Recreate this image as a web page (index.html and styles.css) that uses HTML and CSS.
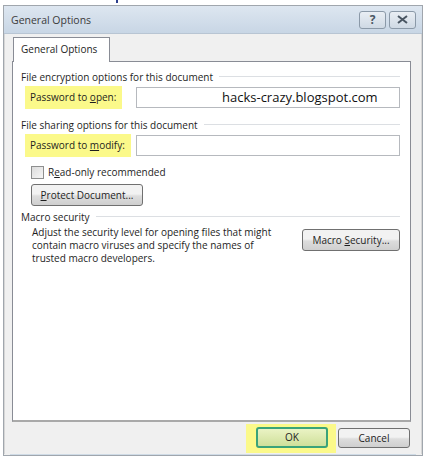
FILE: index.html
```html
<!DOCTYPE html>
<html lang="en">
<head>
  <meta charset="UTF-8">
  <meta name="viewport" content="width=device-width, initial-scale=1.0">
  <title>General Options</title>
  <link rel="stylesheet" href="styles.css">
</head>
<body>
  <div class="mark"></div>
  <div class="window">
    <div class="titlebar">
      <span class="title">General Options</span>
      <div class="caption-buttons">
        <span class="cap-btn">?</span>
        <span class="cap-btn">
          <svg width="11" height="9" viewBox="0 0 11 9"><path d="M1 1 L10 8 M10 1 L1 8" stroke="#4a5663" stroke-width="2" fill="none"/></svg>
        </span>
      </div>
    </div>
    <div class="client">
      <div class="tabs">
        <div class="tab">General Options</div>
      </div>
      <div class="panel">
        <div class="group-label"><span>File encryption options for this document</span></div>
        <div class="field-row">
          <span class="hl label">Password to <u>o</u>pen:</span>
          <span class="input"></span>
        </div>
        <div class="group-label"><span>File sharing options for this document</span></div>
        <div class="field-row">
          <span class="hl label">Password to <u>m</u>odify:</span>
          <span class="input"></span>
        </div>
        <div class="check-row">
          <span class="checkbox"></span>
          <span>R<u>e</u>ad-only recommended</span>
        </div>
        <div class="btn protect"><u>P</u>rotect Document...</div>
        <div class="group-label macro"><span>Macro security</span></div>
        <div class="macro-row">
          <p>Adjust the security level for opening files that might<br>contain macro viruses and specify the names of<br>trusted macro developers.</p>
          <div class="btn macro-btn">Macro <u>S</u>ecurity...</div>
        </div>
        <div class="watermark">hacks-crazy.blogspot.com</div>
      </div>
      <div class="footer">
        <div class="ok-hl"><div class="btn ok">OK</div></div>
        <div class="btn cancel">Cancel</div>
      </div>
    </div>
    <div class="bottom-line"></div>
  </div>
</body>
</html>
```

FILE: styles.css
```css
body {
  margin: 0;
  background: #ffffff;
  font-family: "Open Sans", "Noto Sans", sans-serif;
  font-size: 10px;
  color: #1e1e1e;
}
.mark {
  position: absolute;
  left: 116px;
  top: 0;
  width: 2px;
  height: 3px;
  background: #2c3e8c;
}
.window {
  margin: 5px 4px 0 3px;
  height: 451px;
  border: 1px solid #a0a6ad;
  background: #f0f0f0;
  display: flex;
  flex-direction: column;
  box-sizing: border-box;
}
.titlebar {
  height: 27px;
  display: flex;
  align-items: center;
  justify-content: space-between;
  padding: 0 6px 0 7px;
  background: linear-gradient(#dde6f0, #c8d6e5);
  border-bottom: 1px solid #b8c5d3;
  flex: none;
}
.title {
  font-size: 10.5px;
  color: #3b3b3b;
}
.caption-buttons {
  display: flex;
  gap: 3px;
}
.cap-btn {
  width: 25px;
  height: 16px;
  border: 1px solid #8b99a8;
  border-radius: 3px;
  background: linear-gradient(#e9eef4, #cfd9e4);
  display: flex;
  align-items: center;
  justify-content: center;
  font-size: 12px;
  font-weight: bold;
  color: #4a5663;
}
.client {
  flex: 1;
  display: flex;
  flex-direction: column;
  padding: 3px 10px 0 7px;
  border-left: 1px solid #d6d6d6;
  border-right: 1px solid #d6d6d6;
}
.tabs {
  display: flex;
  height: 24px;
  position: relative;
  z-index: 1;
}
.tab {
  margin-left: 1px;
  padding: 0 12px 0 7px;
  height: 25px;
  line-height: 23px;
  background: #ffffff;
  border: 1px solid #898c95;
  border-bottom: none;
  box-sizing: border-box;
}
.panel {
  position: relative;
  height: 361px;
  background: #ffffff;
  border: 1px solid #898c95;
  border-bottom: 2px solid #a9a9a9;
  padding: 7px 10px 0 8px;
  box-sizing: border-box;
}
.group-label {
  display: flex;
  align-items: center;
  gap: 6px;
  height: 15px;
  white-space: nowrap;
}
.group-label::after {
  content: "";
  flex: 1;
  border-top: 1px solid #dcdfe3;
}
.field-row {
  display: flex;
  align-items: center;
  justify-content: space-between;
  margin: 2px 0 8px 4px;
  height: 23px;
}
.hl {
  background: #fbf98a;
}
.label {
  flex: none;
  white-space: nowrap;
  padding: 0 6px 0 5px;
  height: 23px;
  line-height: 23px;
}
.input {
  flex: none;
  width: 262px;
  height: 19px;
  border: 1px solid #b6b9be;
  background: #ffffff;
}
.check-row {
  display: flex;
  align-items: center;
  gap: 4px;
  margin: 8px 0 0 10px;
  height: 14px;
  white-space: nowrap;
}
.checkbox {
  flex: none;
  width: 11px;
  height: 11px;
  border: 1px solid #8e8f8f;
  background: linear-gradient(135deg, #dcdcdc, #f6f6f6);
}
.btn {
  height: 20px;
  line-height: 20px;
  border: 1px solid #707070;
  border-radius: 3px;
  background: linear-gradient(#f2f2f2 45%, #dddddd 55%, #cfcfcf);
  text-align: center;
  box-sizing: content-box;
  white-space: nowrap;
}
.protect {
  width: 110px;
  margin: 5px 0 0 10px;
}
.macro {
  margin-top: 3px;
}
.macro-row {
  display: flex;
  justify-content: space-between;
  align-items: flex-start;
  padding-left: 11px;
}
.macro-row p {
  margin: 2px 0 0;
  line-height: 13px;
}
.macro-btn {
  width: 96px;
  margin-top: 5px;
}
.watermark {
  position: absolute;
  left: 208px;
  top: 27px;
  font-size: 13px;
  color: #111111;
  background: rgba(255, 255, 255, 0.85);
  padding: 0 1px;
  line-height: 16px;
}
.footer {
  display: flex;
  justify-content: flex-end;
  align-items: center;
  gap: 2px;
  height: 32px;
  padding-right: 1px;
}
.ok-hl {
  background: #fbf98a;
  padding: 3px 8px 5px 10px;
}
.ok {
  width: 68px;
  height: 17px;
  line-height: 17px;
  border: 2px solid #3aa37a;
  background: linear-gradient(#eaf3c4, #cfe09a);
}
.cancel {
  width: 70px;
  height: 18px;
  line-height: 18px;
}
.bottom-line {
  height: 2px;
  margin: 0 6px 3px;
  background: #9fb4c9;
  border-top: 1px solid #cfdbe6;
}
```
